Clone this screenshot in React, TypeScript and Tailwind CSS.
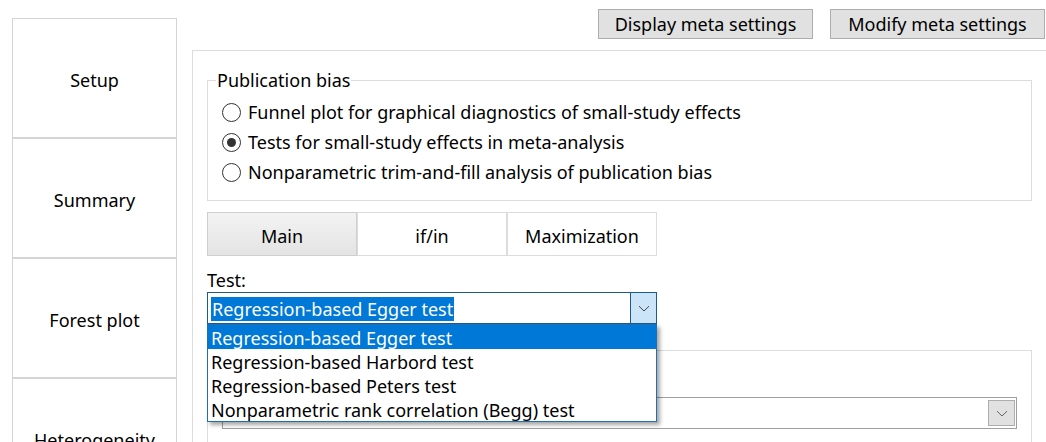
import { useState } from 'react';

const font = { fontFamily: '"Noto Sans", "Liberation Sans", sans-serif' };

const sections = ['Setup', 'Summary', 'Forest plot', 'Heterogeneity'];

const biasOptions = [
  'Funnel plot for graphical diagnostics of small-study effects',
  'Tests for small-study effects in meta-analysis',
  'Nonparametric trim-and-fill analysis of publication bias',
];

const tests = [
  'Regression-based Egger test',
  'Regression-based Harbord test',
  'Regression-based Peters test',
  'Nonparametric rank correlation (Begg) test',
];

function Chevron({ color = '#444' }: { color?: string }) {
  return (
    <svg width="12" height="7" viewBox="0 0 12 7" fill="none">
      <path d="M1 1.2 L6 6 L11 1.2" stroke={color} strokeWidth="1" />
    </svg>
  );
}

function Radio({ checked }: { checked: boolean }) {
  return (
    <span className="w-[19px] h-[19px] rounded-full border border-[#333] bg-white flex items-center justify-center shrink-0">
      {checked && <span className="w-[9px] h-[9px] rounded-full bg-[#333]" />}
    </span>
  );
}

export default function App() {
  const [bias, setBias] = useState(1);
  const [tab, setTab] = useState('Main');

  return (
    <div
      className="flex w-[1046px] h-[442px] overflow-hidden bg-white text-[18px] text-black"
      style={font}
    >
      {/* side sections */}
      <nav className="ml-[12px] mt-[18px] w-[165px] flex flex-col shrink-0">
        {sections.map((s) => (
          <div
            key={s}
            className="h-[120px] shrink-0 border border-[#d4d4d4] flex items-center justify-center pt-[4px]"
          >
            {s}
          </div>
        ))}
      </nav>

      <div className="ml-[15px] flex-1 flex flex-col">
        {/* meta buttons */}
        <div className="h-[50px] shrink-0 flex justify-end gap-[17px] pt-[9px] pr-[1px]">
          <button className="w-[215px] h-[30px] bg-[#e1e1e1] border border-[#adadad] leading-none">
            Display meta settings
          </button>
          <button className="w-[215px] h-[30px] bg-[#e1e1e1] border border-[#adadad] leading-none">
            Modify meta settings
          </button>
        </div>

        {/* main panel */}
        <div className="flex-1 border-l border-t border-[#dcdcdc] pl-[14px] pr-[14px] pt-[17px]">
          <fieldset className="border border-[#dcdcdc]">
            <legend className="ml-[8px] px-[1px] leading-[24px]">Publication bias</legend>
            <div className="pl-[14px] pt-[5px] pb-[13px] flex flex-col">
              {biasOptions.map((o, i) => (
                <label
                  key={o}
                  className="h-[30px] flex items-center gap-[7px] cursor-default"
                  onClick={() => setBias(i)}
                >
                  <Radio checked={bias === i} />
                  <span>{o}</span>
                </label>
              ))}
            </div>
          </fieldset>

          {/* sub tabs */}
          <div className="mt-[11px] flex">
            {['Main', 'if/in', 'Maximization'].map((t) => (
              <button
                key={t}
                onClick={() => setTab(t)}
                className={
                  tab === t
                    ? 'w-[150px] h-[44px] pt-[4px] border border-[#cfcfcf] bg-linear-to-b from-[#f3f3f3] to-[#e4e4e4]'
                    : 'w-[150px] h-[44px] pt-[4px] border border-[#dcdcdc] bg-white'
                }
              >
                {t}
              </button>
            ))}
          </div>

          <div className="mt-[11px] leading-[24px] pt-[1px]">Test:</div>

          {/* test combobox, opened */}
          <div className="relative w-[450px] z-10">
            <div className="h-[32px] border border-[#1a5c92] flex bg-white">
              <div className="flex-1 px-[3px] py-[3px]">
                <span className="inline-block h-[24px] leading-[24px] px-[1px] bg-[#0078d7] text-white">
                  {tests[0]}
                </span>
              </div>
              <div className="w-[26px] bg-[#cce4f7] border-l border-[#1a5c92] flex items-center justify-center">
                <Chevron />
              </div>
            </div>
            <ul className="absolute left-0 top-[32px] w-[450px] border border-[#1f6fb2] bg-white shadow-[3px_3px_4px_rgba(0,0,0,0.35)]">
              {tests.map((t, i) => (
                <li
                  key={t}
                  className={
                    i === 0
                      ? 'h-[24px] leading-[26px] px-[3px] bg-[#0078d7] text-white'
                      : 'h-[24px] leading-[26px] px-[3px]'
                  }
                >
                  {t}
                </li>
              ))}
            </ul>
          </div>

          {/* options group below */}
          <div className="mt-[26px] h-[110px] border border-[#dcdcdc] px-[14px] pt-[46px]">
            <div className="h-[32px] border border-[#a0a0a0] flex items-center justify-end pr-[1px] bg-white">
              <div className="w-[27px] h-[26px] bg-[#e1e1e1] border border-[#adadad] flex items-center justify-center">
                <Chevron color="#666" />
              </div>
            </div>
          </div>
        </div>
      </div>
    </div>
  );
}
